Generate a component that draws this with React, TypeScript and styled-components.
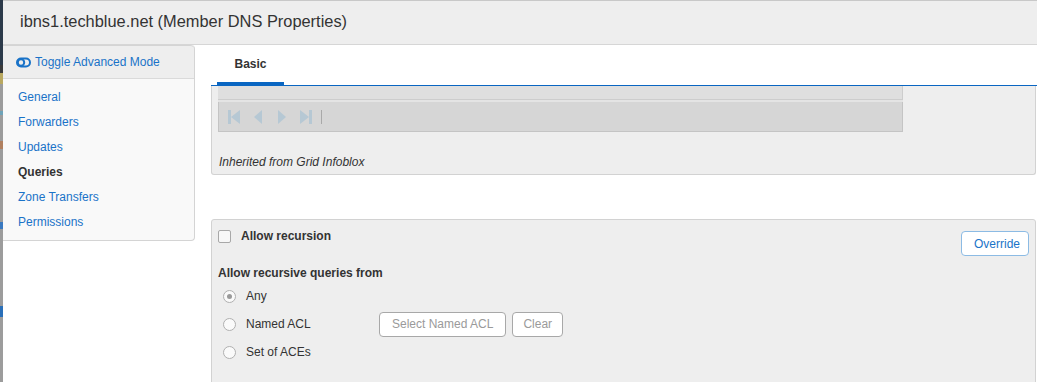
import React from "react";
import styled, { createGlobalStyle } from "styled-components";

const Global = createGlobalStyle`
  html, body { margin: 0; padding: 0; background: #fff; }
  body { font-family: "Liberation Sans", Arial, sans-serif; color: #333; overflow: hidden; }
  * { box-sizing: border-box; }
`;

const Page = styled.div`
  display: flex;
  width: 1037px;
  height: 382px;
  overflow: hidden;
`;

const Backdrop = styled.div`
  width: 3px;
  flex: none;
  background: linear-gradient(
    #2c3a4a 0 17%,
    #3a3a3a 17% 19%,
    #b9a860 19% 22%,
    #9c9c9c 22% 29%,
    #6fa3b8 29% 30%,
    #9c9c9c 30% 37%,
    #b08060 37% 39%,
    #9c9c9c 39% 58%,
    #3a79c0 58% 60%,
    #9c9c9c 60% 80%,
    #2a6fb8 80% 83%,
    #9c9c9c 83% 100%
  );
`;

const Modal = styled.div`
  flex: 1;
  display: flex;
  flex-direction: column;
  border-top: 1px solid #c8c8c8;
  background: #fff;
`;

const Header = styled.div`
  height: 44px;
  flex: none;
  display: flex;
  align-items: center;
  padding: 0 0 2px 17px;
  background: #eeeeee;
  border-bottom: 1px solid #d6d6d6;
`;

const Title = styled.h1`
  margin: 0;
  font-size: 16.4px;
  font-weight: normal;
  color: #333;
`;

const Body = styled.div`
  flex: 1;
  display: flex;
  align-items: flex-start;
  gap: 16px;
`;

const Sidebar = styled.nav`
  width: 192px;
  flex: none;
  border: 1px solid #d4d4d4;
  border-left: none;
  border-top: none;
  border-radius: 0 4px 4px 0;
  background: #f9f9f9;
  padding-bottom: 6px;
`;

const SideHead = styled.div`
  height: 34px;
  display: flex;
  align-items: center;
  gap: 3px;
  padding-left: 12px;
  background: #eeeeee;
  border-bottom: 1px solid #dadada;
  border-top: 1px solid #d4d4d4;
  border-top-right-radius: 4px;
  color: #1a73c8;
  font-size: 12px;
`;

const NavList = styled.ul`
  list-style: none;
  margin: 0;
  padding: 5px 0 0 15px;
`;

const NavItem = styled.li<{ $active?: boolean }>`
  height: 25px;
  display: flex;
  align-items: center;
  font-size: 12px;
  color: ${(p) => (p.$active ? "#333" : "#1a73c8")};
  font-weight: ${(p) => (p.$active ? "bold" : "normal")};
`;

const Main = styled.main`
  flex: 1;
  display: flex;
  flex-direction: column;
  padding-right: 1px;
`;

const Tabs = styled.div`
  height: 41px;
  display: flex;
  align-items: flex-end;
  padding-left: 6px;
  border-bottom: 1px solid #0a66c2;
  margin-right: -2px;
`;

const Tab = styled.div`
  width: 67px;
  height: 100%;
  display: flex;
  align-items: center;
  justify-content: center;
  padding-top: 1px;
  font-size: 12px;
  font-weight: bold;
  color: #333;
  border-bottom: 3px solid #0a66c2;
`;

const Panel = styled.section<{ $top?: number }>`
  margin-top: ${(p) => p.$top ?? 0}px;
  background: #eeeeee;
  border: 1px solid #d2d2d2;
  border-radius: ${(p) => (p.$top ? "3px" : "0 0 3px 3px")};
  border-top: ${(p) => (p.$top ? "1px solid #d2d2d2" : "none")};
  padding: 0 6px;
`;

const Grid = styled.div`
  width: 685px;
  display: flex;
  flex-direction: column;
  gap: 2px;
  background: #e4e4e4;
`;

const GridRow = styled.div`
  height: 14px;
  background: #dfdfdf;
  border-right: 1px solid #cdcdcd;
  border-bottom: 1px solid #cdcdcd;
`;

const Pager = styled.div`
  height: 30px;
  display: flex;
  align-items: center;
  gap: 10px;
  padding-left: 8px;
  background: #d6d6d6;
  border: 1px solid #c4c4c4;
  border-top: none;
`;

const PagerSep = styled.span`
  width: 1px;
  height: 14px;
  background: #a9a9a9;
  margin-left: -2px;
`;

const Note = styled.p`
  margin: 0;
  padding: 23px 0 5px 1px;
  font-size: 12px;
  font-style: italic;
  color: #333;
`;

const PanelTop = styled.div`
  display: flex;
  justify-content: space-between;
  align-items: flex-start;
  padding-top: 9px;
`;

const CheckRow = styled.label`
  display: flex;
  align-items: flex-start;
  gap: 10px;
  font-size: 12px;
  font-weight: bold;
  color: #333;
`;

const Check = styled.span`
  width: 13px;
  height: 13px;
  margin-top: 1px;
  border: 1px solid #a8a8a8;
  border-radius: 2px;
  background: #f7f7f7;
`;

const Button = styled.button<{ $primary?: boolean; $pad?: number }>`
  height: 25px;
  padding: 0 ${(p) => p.$pad ?? 12}px;
  font-family: inherit;
  font-size: 12px;
  border-radius: 4px;
  background: #fff;
  color: ${(p) => (p.$primary ? "#1a73c8" : "#9a9a9a")};
  border: 1px solid ${(p) => (p.$primary ? "#8cbbe4" : "#a8a8a8")};
`;

const OverrideBtn = styled(Button)`
  width: 68px;
  margin-top: 2px;
`;

const GroupLabel = styled.div`
  margin-top: 10px;
  font-size: 12px;
  font-weight: bold;
  color: #333;
`;

const RadioList = styled.div`
  display: flex;
  flex-direction: column;
  padding-left: 5px;
  padding-top: 2px;
  padding-bottom: 30px;
`;

const RadioRow = styled.div`
  height: 28px;
  display: flex;
  align-items: center;
`;

const RadioLabel = styled.span`
  width: 133px;
  margin-left: 10px;
  font-size: 12px;
  color: #333;
`;

const Radio = styled.span<{ $checked?: boolean }>`
  width: 13px;
  height: 13px;
  border-radius: 50%;
  border: 1px solid #b0b0b0;
  background: #fafafa;
  display: flex;
  align-items: center;
  justify-content: center;
  &::after {
    content: "";
    width: 5px;
    height: 5px;
    border-radius: 50%;
    background: ${(p) => (p.$checked ? "#9a9a9a" : "transparent")};
  }
`;

const BtnGroup = styled.div`
  display: flex;
  gap: 6px;
`;

const ToggleIcon = () => (
  <svg width="17" height="12" viewBox="0 0 17 12">
    <rect x="2" y="2.5" width="13" height="8" rx="4" fill="none" stroke="#1a73c8" strokeWidth="2" />
    <circle cx="6" cy="6.5" r="3.2" fill="none" stroke="#1a73c8" strokeWidth="2" />
  </svg>
);

const PagerIcon = ({ kind }: { kind: "first" | "prev" | "next" | "last" }) => {
  const c = "#b6c8d4";
  return (
    <svg width="14" height="16" viewBox="0 0 14 16">
      {kind === "first" && (
        <>
          <rect x="1" y="1" width="3" height="14" fill={c} />
          <polygon points="13,1 13,15 4,8" fill={c} />
        </>
      )}
      {kind === "prev" && <polygon points="11,1 11,15 3,8" fill={c} />}
      {kind === "next" && <polygon points="3,1 3,15 11,8" fill={c} />}
      {kind === "last" && (
        <>
          <polygon points="1,1 1,15 10,8" fill={c} />
          <rect x="10" y="1" width="3" height="14" fill={c} />
        </>
      )}
    </svg>
  );
};

const navItems = ["General", "Forwarders", "Updates", "Queries", "Zone Transfers", "Permissions"];

export default function App() {
  return (
    <>
      <Global />
      <Page>
        <Backdrop />
        <Modal>
          <Header>
            <Title>ibns1.techblue.net (Member DNS Properties)</Title>
          </Header>
          <Body>
            <Sidebar>
              <SideHead>
                <ToggleIcon />
                <span>Toggle Advanced Mode</span>
              </SideHead>
              <NavList>
                {navItems.map((n) => (
                  <NavItem key={n} $active={n === "Queries"}>
                    {n}
                  </NavItem>
                ))}
              </NavList>
            </Sidebar>
            <Main>
              <Tabs>
                <Tab>Basic</Tab>
              </Tabs>
              <Panel>
                <Grid>
                  <GridRow />
                  <Pager>
                    <PagerIcon kind="first" />
                    <PagerIcon kind="prev" />
                    <PagerIcon kind="next" />
                    <PagerIcon kind="last" />
                    <PagerSep />
                  </Pager>
                </Grid>
                <Note>Inherited from Grid Infoblox</Note>
              </Panel>
              <Panel $top={44}>
                <PanelTop>
                  <CheckRow>
                    <Check />
                    <span>Allow recursion</span>
                  </CheckRow>
                  <OverrideBtn $primary>Override</OverrideBtn>
                </PanelTop>
                <GroupLabel>Allow recursive queries from</GroupLabel>
                <RadioList>
                  <RadioRow>
                    <Radio $checked />
                    <RadioLabel>Any</RadioLabel>
                  </RadioRow>
                  <RadioRow>
                    <Radio />
                    <RadioLabel>Named ACL</RadioLabel>
                    <BtnGroup>
                      <Button>Select Named ACL</Button>
                      <Button $pad={10}>Clear</Button>
                    </BtnGroup>
                  </RadioRow>
                  <RadioRow>
                    <Radio />
                    <RadioLabel>Set of ACEs</RadioLabel>
                  </RadioRow>
                </RadioList>
              </Panel>
            </Main>
          </Body>
        </Modal>
      </Page>
    </>
  );
}
